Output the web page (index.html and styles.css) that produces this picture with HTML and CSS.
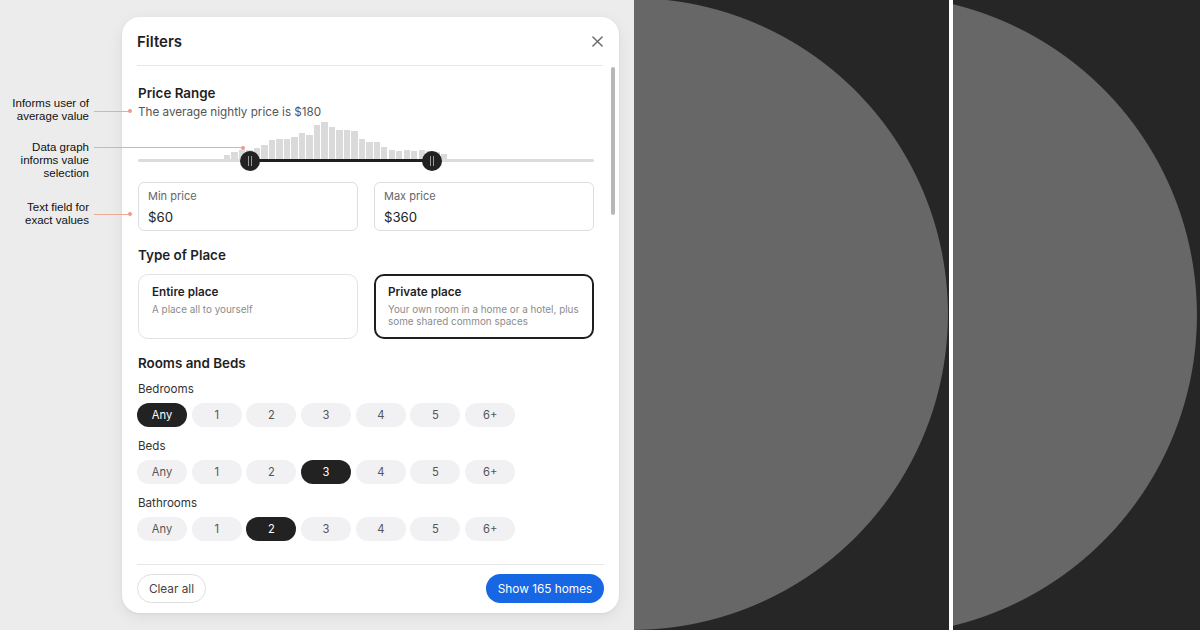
FILE: index.html
```html
<!DOCTYPE html>
<html lang="en">
<head>
<meta charset="utf-8">
<title>Filters</title>
<link rel="stylesheet" href="styles.css">
</head>
<body>
<div class="page">
  <div class="stage">
    <div class="note note-avg">
      <div class="note-text">Informs user of<br>average value</div>
      <div class="note-line"></div>
    </div>
    <div class="note note-graph">
      <div class="note-text">Data graph<br>informs value<br>selection</div>
      <div class="note-line"></div>
    </div>
    <div class="note note-field">
      <div class="note-text">Text field for<br>exact values</div>
      <div class="note-line"></div>
    </div>

    <div class="modal">
      <div class="modal-head">
        <h2 class="modal-title">Filters</h2>
        <svg class="close" viewBox="0 0 12 12" width="12" height="12"><path d="M1 1 L11 11 M11 1 L1 11" stroke="#6b6b6b" stroke-width="1.6" stroke-linecap="round" fill="none"/></svg>
      </div>
      <div class="modal-body">
        <div class="content">
          <h3 class="sec-title">Price Range</h3>
          <p class="sec-sub">The average nightly price is $180</p>
          <div class="slider">
            <div class="hist">
              <span class="bar" style="height:4px"></span>
              <span class="bar" style="height:7px"></span>
              <span class="bar" style="height:9px"></span>
              <span class="bar" style="height:9px"></span>
              <span class="bar" style="height:11px"></span>
              <span class="bar" style="height:14px"></span>
              <span class="bar" style="height:19px"></span>
              <span class="bar" style="height:20px"></span>
              <span class="bar" style="height:20px"></span>
              <span class="bar" style="height:22px"></span>
              <span class="bar" style="height:26px"></span>
              <span class="bar" style="height:24px"></span>
              <span class="bar" style="height:34px"></span>
              <span class="bar" style="height:37px"></span>
              <span class="bar" style="height:32px"></span>
              <span class="bar" style="height:29px"></span>
              <span class="bar" style="height:29px"></span>
              <span class="bar" style="height:28px"></span>
              <span class="bar" style="height:20px"></span>
              <span class="bar" style="height:17px"></span>
              <span class="bar" style="height:17px"></span>
              <span class="bar" style="height:12px"></span>
              <span class="bar" style="height:9px"></span>
              <span class="bar" style="height:8px"></span>
              <span class="bar" style="height:9px"></span>
              <span class="bar" style="height:8px"></span>
              <span class="bar" style="height:9px"></span>
              <span class="bar" style="height:8px"></span>
              <span class="bar" style="height:7px"></span>
              <span class="bar" style="height:5px"></span>
            </div>
            <div class="track"></div>
            <div class="range" style="left:112px;width:182px"></div>
            <div class="thumb" style="left:102px"><i></i><i></i></div>
            <div class="thumb" style="left:284px"><i></i><i></i></div>
          </div>
          <div class="prices">
            <div class="field">
              <div class="field-label">Min price</div>
              <div class="field-value">$60</div>
            </div>
            <div class="field">
              <div class="field-label">Max price</div>
              <div class="field-value">$360</div>
            </div>
          </div>

          <h3 class="sec-title sec-gap">Type of Place</h3>
          <div class="places">
            <div class="place">
              <div class="place-title">Entire place</div>
              <div class="place-desc">A place all to yourself</div>
            </div>
            <div class="place place-on">
              <div class="place-title">Private place</div>
              <div class="place-desc">Your own room in a home or a hotel, plus some shared common spaces</div>
            </div>
          </div>

          <h3 class="sec-title sec-gap">Rooms and Beds</h3>
          <div class="group">
            <div class="group-label">Bedrooms</div>
            <div class="pills">
              <span class="pill pill-on">Any</span><span class="pill">1</span><span class="pill">2</span><span class="pill">3</span><span class="pill">4</span><span class="pill">5</span><span class="pill">6+</span>
            </div>
          </div>
          <div class="group">
            <div class="group-label">Beds</div>
            <div class="pills">
              <span class="pill">Any</span><span class="pill">1</span><span class="pill">2</span><span class="pill pill-on">3</span><span class="pill">4</span><span class="pill">5</span><span class="pill">6+</span>
            </div>
          </div>
          <div class="group">
            <div class="group-label">Bathrooms</div>
            <div class="pills">
              <span class="pill">Any</span><span class="pill">1</span><span class="pill pill-on">2</span><span class="pill">3</span><span class="pill">4</span><span class="pill">5</span><span class="pill">6+</span>
            </div>
          </div>
        </div>
        <div class="scroll"><div class="scroll-thumb"></div></div>
      </div>
      <div class="modal-foot">
        <button class="btn-clear">Clear all</button>
        <button class="btn-show">Show 165 homes</button>
      </div>
    </div>
  </div>
  <div class="panel panel-a"></div>
  <div class="divider"></div>
  <div class="panel panel-b"></div>
</div>
</body>
</html>
```
FILE: styles.css
```css
html, body {
  margin: 0;
  padding: 0;
}
body {
  background: #ececec;
  font-family: Inter, "Noto Sans", sans-serif;
  color: #1f1f1f;
}
.page {
  display: flex;
  width: 1200px;
  height: 630px;
  overflow: hidden;
}
.stage {
  position: relative;
  flex: none;
  width: 634px;
  height: 630px;
  box-sizing: border-box;
  padding: 17px 15px 17px 122px;
}

/* annotations */
.note {
  position: absolute;
  left: 0;
  display: flex;
  align-items: flex-start;
  z-index: 2;
}
.note-text {
  width: 89px;
  text-align: right;
  font-family: "Liberation Sans", Arial, sans-serif;
  font-size: 11.5px;
  line-height: 13px;
  color: #111;
}
.note-line {
  position: relative;
  height: 1px;
  margin-left: 5px;
  background: #f2a898;
}
.note-line::after {
  content: "";
  position: absolute;
  right: -2px;
  top: -1.5px;
  width: 4px;
  height: 4px;
  border-radius: 50%;
  background: #ef9a86;
}
.note-avg { top: 96.5px; }
.note-avg .note-line { width: 36px; margin-top: 14px; }
.note-graph { top: 140.5px; }
.note-graph .note-line { width: 149px; margin-top: 6.5px; }
.note-field { top: 200.5px; }
.note-field .note-line { width: 36px; margin-top: 13px; }

/* modal */
.modal {
  width: 497px;
  height: 596px;
  background: #fff;
  border-radius: 18px;
  box-shadow: 0 1px 3px rgba(0,0,0,0.05), 0 4px 16px rgba(0,0,0,0.07);
  display: flex;
  flex-direction: column;
  overflow: hidden;
}
.modal-head {
  flex: none;
  height: 48px;
  margin: 0 16px 0 15px;
  border-bottom: 1px solid #e6e6e6;
  display: flex;
  align-items: center;
  justify-content: space-between;
}
.modal-title {
  margin: 0;
  font-size: 15px;
  font-weight: 600;
  color: #1f1f1f;
}
.close { display: block; width: 11px; height: 11px; }

.modal-body {
  flex: none;
  height: 498px;
  display: flex;
  overflow: hidden;
}
.content {
  flex: none;
  width: 456px;
  padding: 18px 0 0 16px;
}
.scroll {
  flex: 1;
  padding: 1px 0 0 17px;
}
.scroll-thumb {
  width: 4px;
  height: 148px;
  border-radius: 3px;
  background: #b7b7b7;
}

.sec-title {
  margin: 0;
  font-size: 13.4px;
  line-height: 18px;
  font-weight: 600;
  color: #1f1f1f;
}
.sec-gap { margin-top: 15px; }
.sec-sub {
  margin: 2px 0 0;
  font-size: 11.7px;
  line-height: 16px;
  color: #555;
}

/* slider */
.slider {
  position: relative;
  height: 50px;
  margin-top: 1px;
}
.hist {
  display: flex;
  align-items: flex-end;
  gap: 1.2px;
  height: 38px;
  margin-left: 86px;
}
.bar {
  flex: none;
  width: 6.3px;
  background: #dadada;
}
.track {
  height: 3px;
  border-radius: 2px;
  background: #dcdcdf;
}
.range {
  position: absolute;
  top: 38px;
  height: 3px;
  background: #1f1f1f;
}
.thumb {
  position: absolute;
  top: 29.5px;
  width: 20px;
  height: 20px;
  border-radius: 50%;
  background: #222;
  display: flex;
  align-items: center;
  justify-content: center;
  gap: 2px;
}
.thumb i {
  display: block;
  width: 1px;
  height: 10px;
  background: #9a9a9a;
}

/* price fields */
.prices {
  display: flex;
  gap: 16px;
  margin-top: 11px;
}
.field {
  flex: 1;
  height: 49px;
  box-sizing: border-box;
  border: 1px solid #dedede;
  border-radius: 6px;
  padding: 6px 9px 0;
}
.field-label {
  font-size: 11px;
  line-height: 15px;
  color: #666;
}
.field-value {
  margin-top: 4px;
  font-size: 13.2px;
  line-height: 18px;
  color: #222;
}

/* type of place */
.places {
  display: flex;
  gap: 16px;
  margin-top: 10px;
}
.place {
  flex: 1;
  height: 65px;
  box-sizing: border-box;
  border: 1px solid #e3e3e3;
  border-radius: 10px;
  padding: 9px 6px 0 13px;
}
.place-on {
  border: 2px solid #1e1e1e;
  padding: 8px 5px 0 12px;
}
.place-title {
  font-size: 11.7px;
  line-height: 16px;
  font-weight: 600;
  color: #1f1f1f;
}
.place-desc {
  margin-top: 2.5px;
  font-size: 9.9px;
  line-height: 12.5px;
  color: #8c8c8c;
}

/* rooms and beds */
.group { margin-top: 9px; }
.group + .group { margin-top: 11px; }
.group-label {
  font-size: 11.6px;
  line-height: 16px;
  color: #333;
}
.pills {
  display: flex;
  gap: 4.7px;
  margin-top: 6px;
  margin-left: -1px;
}
.pill {
  flex: none;
  width: 50px;
  height: 24px;
  border-radius: 12px;
  background: #f1f1f3;
  color: #555;
  font-size: 11.2px;
  display: flex;
  align-items: center;
  justify-content: center;
}
.pill-on {
  background: #222;
  color: #fff;
}

/* footer */
.modal-foot {
  flex: none;
  margin: 0 15px;
  border-top: 1px solid #e6e6e6;
  padding: 9px 0 10px;
  display: flex;
  justify-content: space-between;
}
.btn-clear,
.btn-show {
  height: 29px;
  border-radius: 15px;
  font-family: Inter, "Noto Sans", sans-serif;
  font-size: 11.8px;
  padding: 0;
  cursor: pointer;
}
.btn-clear {
  width: 69px;
  background: #fff;
  border: 1px solid #dedede;
  color: #444;
}
.btn-show {
  width: 118px;
  background: #1766e4;
  border: none;
  color: #fff;
}

/* right panels */
.panel {
  flex: none;
  height: 630px;
}
.panel-a {
  width: 315px;
  background: radial-gradient(circle 316px at -2px 314px, #676767 315.4px, #262626 316.4px);
}
.divider {
  flex: none;
  width: 4px;
  background: #fff;
}
.panel-b {
  width: 247px;
  background: radial-gradient(circle 320px at -76px 315px, #676767 319.4px, #262626 320.4px);
}
```
